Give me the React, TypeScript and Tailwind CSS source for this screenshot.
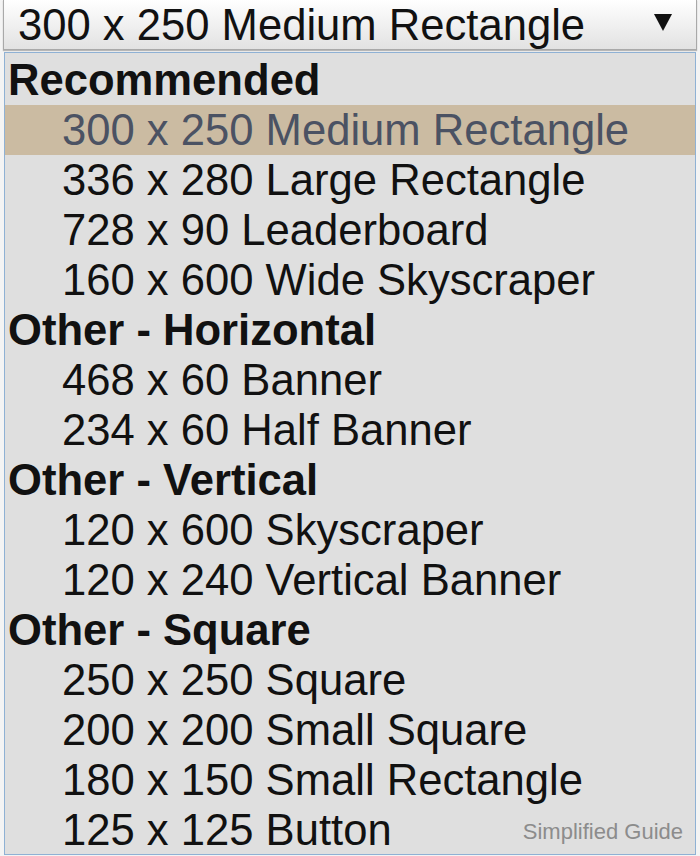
const groups: { label: string; items: string[] }[] = [
  {
    label: "Recommended",
    items: [
      "300 x 250 Medium Rectangle",
      "336 x 280 Large Rectangle",
      "728 x 90 Leaderboard",
      "160 x 600 Wide Skyscraper",
    ],
  },
  {
    label: "Other - Horizontal",
    items: ["468 x 60 Banner", "234 x 60 Half Banner"],
  },
  {
    label: "Other - Vertical",
    items: ["120 x 600 Skyscraper", "120 x 240 Vertical Banner"],
  },
  {
    label: "Other - Square",
    items: [
      "250 x 250 Square",
      "200 x 200 Small Square",
      "180 x 150 Small Rectangle",
      "125 x 125 Button",
    ],
  },
]

const selected = "300 x 250 Medium Rectangle"

export default function App() {
  return (
    <div className="relative w-[700px] h-[856px] overflow-hidden bg-[#f4f4f4] font-['Liberation_Sans',Arial,sans-serif] text-[43.6px]">
      {/* closed select */}
      <div className="mx-[3px] h-[50px] border-x border-b border-[#a9a9a9] bg-gradient-to-b from-white to-[#e2e2e2] flex items-center justify-between pl-[14px] pr-[24px] shadow-[0_1px_1px_rgba(0,0,0,0.25)]">
        <span className="leading-[50px] text-[#111]">{selected}</span>
        <svg width="18" height="17" viewBox="0 0 18 17" className="mb-[4px]">
          <polygon points="0,0 18,0 9,17" fill="#111" />
        </svg>
      </div>

      {/* open list */}
      <div className="mt-[2px] mx-[4px] h-[803px] border border-[#8fb1d4] bg-[#dfdfdf] overflow-hidden pt-[2px]">
        {groups.map((g) => (
          <div key={g.label}>
            <div className="h-[50px] leading-[50px] pl-[3px] font-bold text-[#111] whitespace-nowrap">
              {g.label}
            </div>
            {g.items.map((it) => (
              <div
                key={it}
                className={
                  it === selected
                    ? "h-[50px] leading-[50px] pl-[57px] whitespace-nowrap bg-[#cbbba2] text-[#4b5263]"
                    : "h-[50px] leading-[50px] pl-[57px] whitespace-nowrap text-[#111]"
                }
              >
                {it}
              </div>
            ))}
          </div>
        ))}
      </div>

      <span className="absolute right-[17px] bottom-[13px] text-[22px] leading-none text-[#8c8c8c]">
        Simplified Guide
      </span>
    </div>
  )
}
